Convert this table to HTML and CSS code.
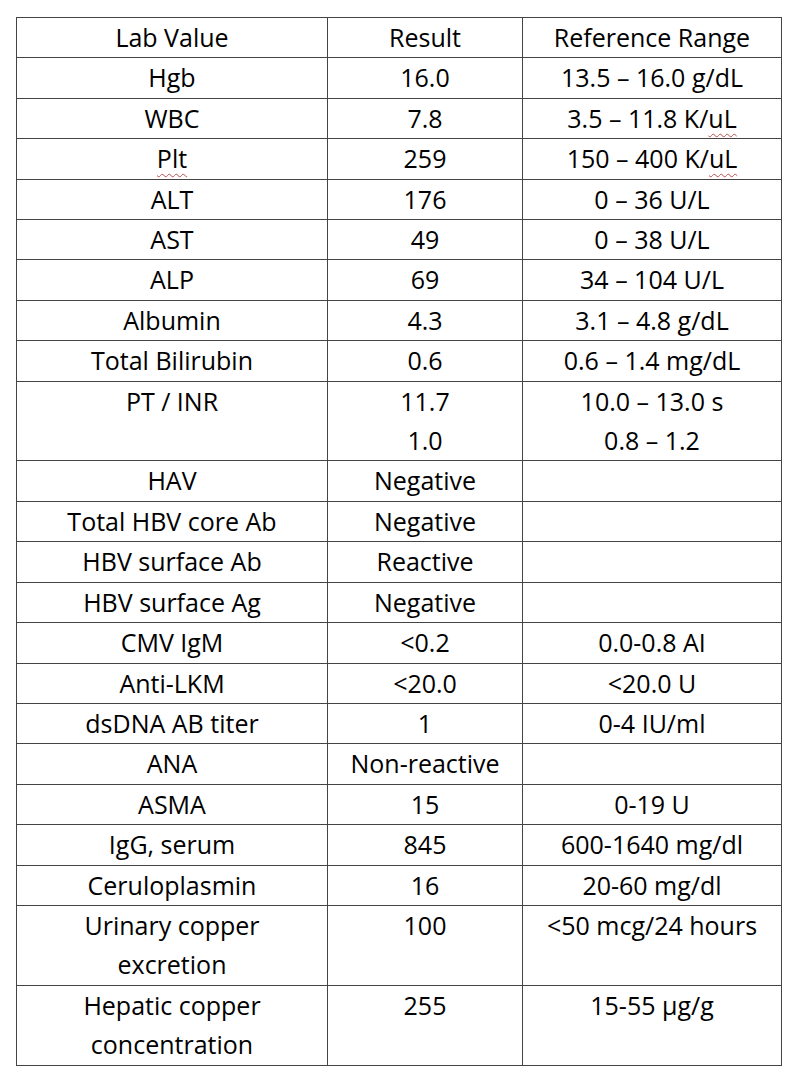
FILE: index.html
```html
<!DOCTYPE html>
<html>
<head>
<meta charset="utf-8">
<link rel="stylesheet" href="styles.css">
</head>
<body>
<table class="labs">
  <colgroup>
    <col class="c1"><col class="c2"><col class="c3">
  </colgroup>
  <tr><td>Lab Value</td><td>Result</td><td>Reference Range</td></tr>
  <tr><td>Hgb</td><td>16.0</td><td>13.5 – 16.0 g/dL</td></tr>
  <tr><td>WBC</td><td>7.8</td><td>3.5 – 11.8 K/<span class="spell">uL</span></td></tr>
  <tr><td><span class="spell">Plt</span></td><td>259</td><td>150 – 400 K/<span class="spell">uL</span></td></tr>
  <tr><td>ALT</td><td>176</td><td>0 – 36 U/L</td></tr>
  <tr><td>AST</td><td>49</td><td>0 – 38 U/L</td></tr>
  <tr><td>ALP</td><td>69</td><td>34 – 104 U/L</td></tr>
  <tr><td>Albumin</td><td>4.3</td><td>3.1 – 4.8 g/dL</td></tr>
  <tr><td>Total Bilirubin</td><td>0.6</td><td>0.6 – 1.4 mg/dL</td></tr>
  <tr><td>PT / INR</td><td>11.7<br>1.0</td><td>10.0 – 13.0 s<br>0.8 – 1.2</td></tr>
  <tr><td>HAV</td><td>Negative</td><td></td></tr>
  <tr><td>Total HBV core Ab</td><td>Negative</td><td></td></tr>
  <tr><td>HBV surface Ab</td><td>Reactive</td><td></td></tr>
  <tr><td>HBV surface Ag</td><td>Negative</td><td></td></tr>
  <tr><td>CMV IgM</td><td>&lt;0.2</td><td>0.0-0.8 AI</td></tr>
  <tr><td>Anti-LKM</td><td>&lt;20.0</td><td>&lt;20.0 U</td></tr>
  <tr><td>dsDNA AB titer</td><td>1</td><td>0-4 IU/ml</td></tr>
  <tr><td>ANA</td><td>Non-reactive</td><td></td></tr>
  <tr><td>ASMA</td><td>15</td><td>0-19 U</td></tr>
  <tr><td>IgG, serum</td><td>845</td><td>600-1640 mg/dl</td></tr>
  <tr><td>Ceruloplasmin</td><td>16</td><td>20-60 mg/dl</td></tr>
  <tr><td>Urinary copper<br>excretion</td><td>100</td><td>&lt;50 mcg/24 hours</td></tr>
  <tr><td>Hepatic copper<br>concentration</td><td>255</td><td>15-55 µg/g</td></tr>
</table>
</body>
</html>
```

FILE: styles.css
```css
html, body {
  margin: 0;
  background: #ffffff;
}
body {
  padding: 17px 0 0 16px;
  font-family: "Open Sans", "Liberation Sans", sans-serif;
  color: #000000;
}
.labs {
  border-collapse: collapse;
  width: 765px;
  table-layout: fixed;
}
.c1 { width: 311px; }
.c2 { width: 195px; }
.c3 { width: 259px; }
.labs td {
  border: 1px solid #444444;
  padding: 0;
  text-align: center;
  vertical-align: top;
  font-size: 25px;
  line-height: 39.4px;
  white-space: nowrap;
}
.spell {
  text-decoration: underline wavy #c0504d;
  text-decoration-thickness: 1px;
  text-underline-offset: 5px;
}
```
